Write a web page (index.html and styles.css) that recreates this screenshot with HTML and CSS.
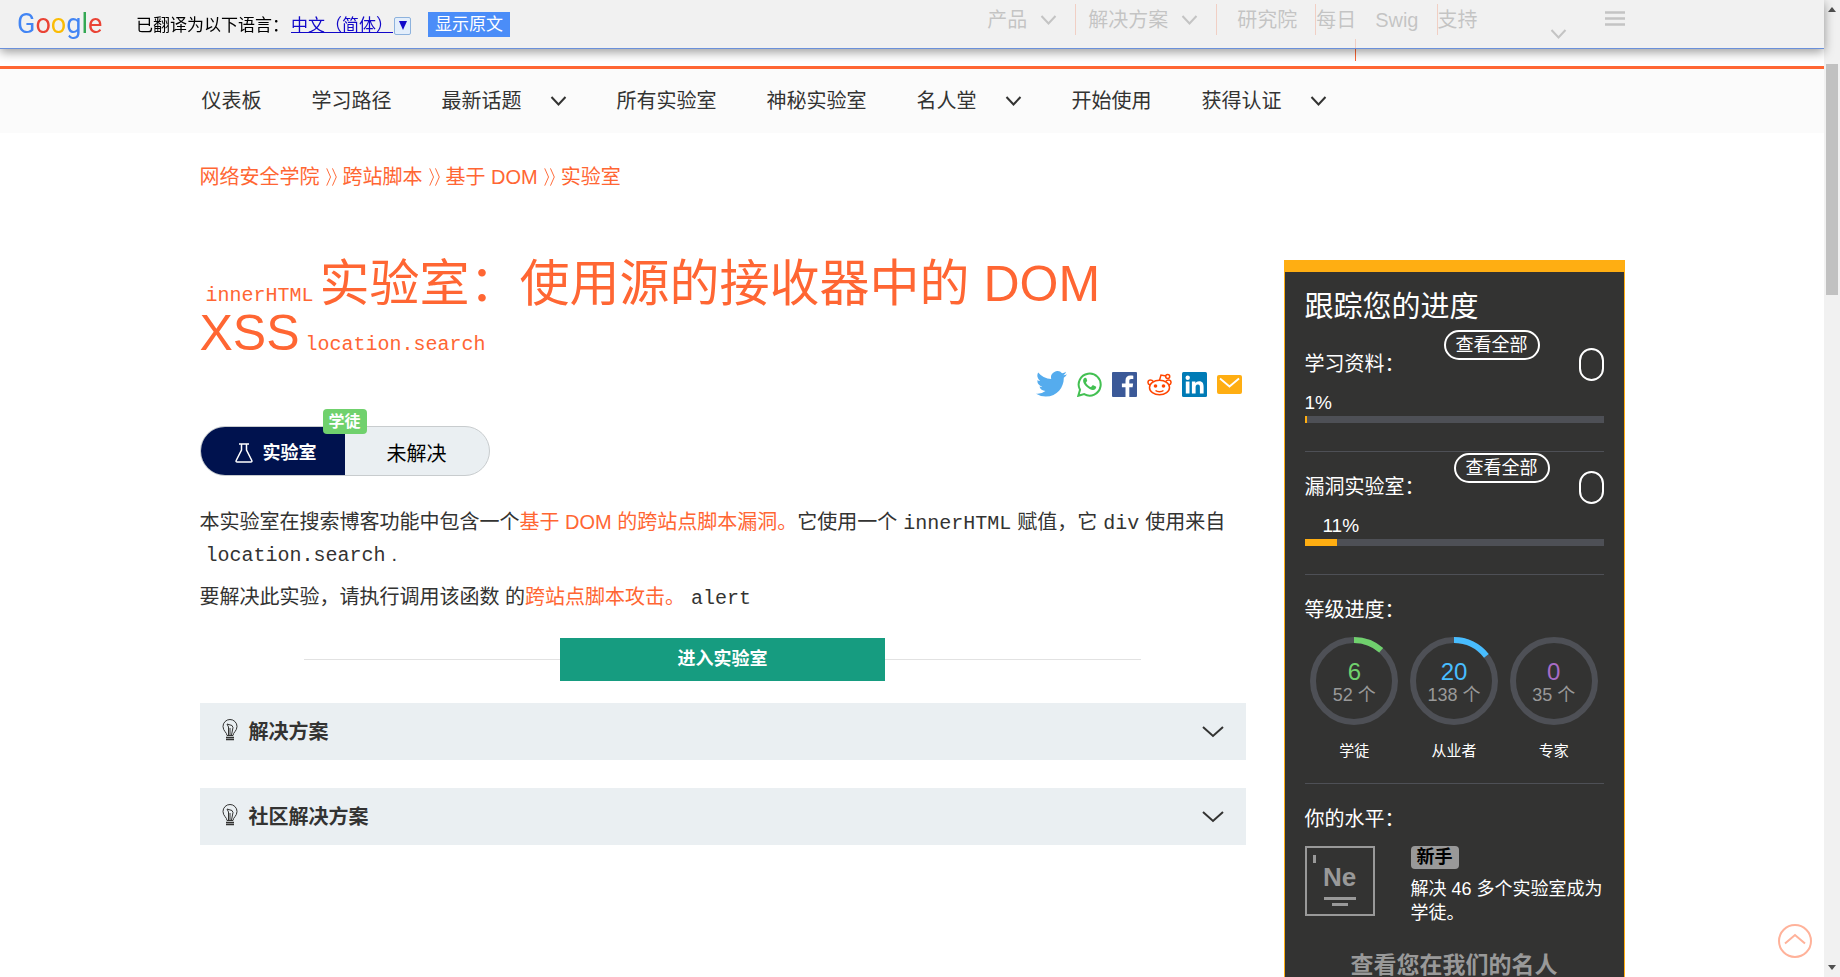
FILE: index.html
```html
<!DOCTYPE html>
<html lang="zh-CN">
<head>
<meta charset="utf-8">
<title>实验室：使用源的接收器中的 DOM XSS</title>
<link rel="stylesheet" href="styles.css">
</head>

<body>

<!-- translate toolbar -->
<div class="translate-bar">
  <a class="google" href="#"><span class="b">G</span><span class="r">o</span><span class="y">o</span><span class="b">g</span><span class="g">l</span><span class="r">e</span></a>
  <span class="translate-label">已翻译为以下语言：</span>
  <a class="translate-lang" href="#">中文（简体）</a>
  <button class="lang-arrow" type="button" aria-label="语言"><svg width="10" height="10" viewBox="0 0 10 10"><path d="M1 0h8L5 9z" fill="#1208c9"/></svg></button>
  <button class="show-original" type="button">显示原文</button>
</div>

<header class="site-header">
  <ul class="container top-menu">
    <li class="first"><a href="#">产品</a><svg class="chev" viewBox="0 0 17 10"><path d="M1.500 1l7 7.500 7-7.500"/></svg></li>
    <li><a href="#">解决方案</a><svg class="chev" viewBox="0 0 17 10"><path d="M1.500 1l7 7.500 7-7.500"/></svg></li>
    <li class="wide"><a href="#">研究院</a></li>
    <li class="daily"><a href="#">每日</a><a href="#">Swig</a></li>
    <li class="support"><a href="#">支持</a><svg class="chev" viewBox="0 0 17 10"><path d="M1.500 1l7 7.500 7-7.500"/></svg></li>
    <li class="burger"><button type="button" aria-label="菜单"><svg width="20" height="15" viewBox="0 0 20 15"><path d="M0 1.500h20M0 7.500h20M0 13.500h20" stroke="#333332" stroke-width="2.500"/></svg></button></li>
  </ul>
</header>

<nav class="academy-nav">
  <ul class="container">
    <li><a href="#">仪表板</a></li>
    <li><a href="#">学习路径</a></li>
    <li><a href="#">最新话题</a><svg class="chev" viewBox="0 0 17 10"><path d="M1.500 1l7 7.500 7-7.500"/></svg></li>
    <li><a href="#">所有实验室</a></li>
    <li><a href="#">神秘实验室</a></li>
    <li><a href="#">名人堂</a><svg class="chev" viewBox="0 0 17 10"><path d="M1.500 1l7 7.500 7-7.500"/></svg></li>
    <li><a href="#">开始使用</a></li>
    <li><a href="#">获得认证</a><svg class="chev" viewBox="0 0 17 10"><path d="M1.500 1l7 7.500 7-7.500"/></svg></li>
  </ul>
</nav>

<main class="container">
  <div class="breadcrumbs">
    <a href="#">网络安全学院</a><svg class="sep" viewBox="0 0 24 20"><path d="M7 1l4 9-4 9M13 1l4 9-4 9"/></svg><a href="#">跨站脚本</a><svg class="sep" viewBox="0 0 24 20"><path d="M7 1l4 9-4 9M13 1l4 9-4 9"/></svg><a href="#">基于 DOM</a><svg class="sep" viewBox="0 0 24 20"><path d="M7 1l4 9-4 9M13 1l4 9-4 9"/></svg><a href="#">实验室</a>
  </div>

  <div class="columns">
    <section class="lab">
      <h1><code>innerHTML</code>实验室：使用源的接收器中的 DOM XSS<code>location.search</code></h1>

      <div class="share">
        <a href="#" aria-label="Twitter"><svg width="31" height="26" viewBox="0 0 24 20"><path fill="#55acee" d="M24 2.400a9.800 9.800 0 0 1-2.800.800A4.900 4.900 0 0 0 23.300.500a9.900 9.900 0 0 1-3.100 1.200 4.900 4.900 0 0 0-8.400 4.500A14 14 0 0 1 1.700 1.100a4.900 4.900 0 0 0 1.500 6.500 4.900 4.900 0 0 1-2.200-.600v.100a4.900 4.900 0 0 0 3.900 4.800 4.900 4.900 0 0 1-2.200.100 4.900 4.900 0 0 0 4.600 3.400A9.900 9.900 0 0 1 0 17.500a14 14 0 0 0 7.500 2.200c9.100 0 14-7.500 14-14v-.600A10 10 0 0 0 24 2.400z"/></svg></a>
        <a href="#" aria-label="WhatsApp"><svg width="25" height="25" viewBox="0 0 25 25"><path d="M1.300 23.800l1.700-6a11 11 0 1 1 4.200 4.300z" fill="none" stroke="#43c052" stroke-width="2"/><path fill="#43c052" d="M9.400 6.300c-.300-.700-.600-.700-1.300-.600-.700.100-2 1.200-2 3 0 2 1.500 4.100 3.200 5.900 2 2 4.800 3.600 6.800 3.500 1.500-.100 3-1.200 3.100-2.800 0-.400 0-.600-.400-.800l-2.500-1.200c-.400-.200-.700-.100-1 .200l-1 1.300c-.200.200-.500.300-.8.100-2-.900-3.400-2.200-4.400-4-.200-.300 0-.500.100-.700l.9-1.200c.1-.200.1-.400 0-.700z"/></svg></a>
        <a href="#" aria-label="Facebook"><svg width="25" height="25" viewBox="0 0 25 25"><rect width="25" height="25" rx="1" fill="#3b5998"/><path fill="#fff" d="M13.500 25v-9.800h-3.600v-3.700h3.600V8.600c0-3.300 2-5 4.900-5 1.400 0 2.300.1 2.900.2v3.300h-2c-1.600 0-2 .8-2 1.900v2.500h3.800l-.5 3.700h-3.300V25z"/></svg></a>
        <a href="#" aria-label="Reddit"><svg width="25" height="25" viewBox="0 0 25 25" fill="none" stroke="#ff4500" stroke-width="1.500"><ellipse cx="12.500" cy="15.500" rx="10" ry="7.300"/><path d="M3 13c-3-1-2.500-5 .5-5 1.500 0 2.300.8 2.800 1.500M22 13c3-1 2.500-5-.5-5-1.500 0-2.300.8-2.800 1.500M12.500 8.200L14 3l5 1M8.500 18.500c2 1.600 6 1.600 8 0"/><circle cx="20.700" cy="4.500" r="2"/><g fill="#ff4500" stroke="none"><circle cx="8.500" cy="14" r="1.800"/><circle cx="16.500" cy="14" r="1.800"/></g></svg></a>
        <a href="#" aria-label="LinkedIn"><svg width="25" height="25" viewBox="0 0 25 25"><rect width="25" height="25" rx="1.500" fill="#007bb6"/><g fill="#fff"><circle cx="5.700" cy="5.800" r="2.200"/><path d="M3.800 9.500h3.700v12H3.800zM9.900 9.500h3.500v1.700c.6-1.100 1.900-2 3.700-2 3.700 0 4.500 2.400 4.500 5.700v6.600h-3.700v-5.900c0-1.400 0-3.200-2-3.200s-2.300 1.500-2.300 3.100v6H9.900z"/></g></svg></a>
        <a href="#" aria-label="Email"><svg width="25" height="25" viewBox="0 0 25 25"><rect y="3" width="25" height="19" rx="2" fill="#ffae12"/><path d="M3 6.500l9.500 8 9.500-8" fill="none" stroke="#fff" stroke-width="1.800"/></svg></a>
      </div>

      <div class="status">
        <span class="status-lab"><svg width="18" height="20" viewBox="0 0 18 20" fill="none" stroke="#fff" stroke-width="1.500"><path d="M4 1h10M6.500 1v6L1.200 17.500c-.4 1 0 1.500 1 1.500h13.600c1 0 1.400-.5 1-1.500L11.500 7V1"/></svg>实验室</span>
        <span class="status-text">未解决</span>
        <span class="status-level">学徒</span>
      </div>

      <p>本实验室在搜索博客功能中包含一个<a href="#">基于 DOM 的跨站点脚本漏洞。</a>它使用一个<code>innerHTML</code>赋值，它<code>div</code>使用来自<code>location.search</code>.</p>
      <p>要解决此实验，请执行调用该函数 的<a href="#">跨站点脚本攻击。</a><code>alert</code></p>

      <div class="launch"><a href="#">进入实验室</a></div>

      <button class="accordion" type="button">
        <svg class="bulb" viewBox="0 0 16 22"><path d="M5 16.500c0-3-4-4.500-4-9a7 7 0 0 1 14 0c0 4.500-4 6-4 9zM6.500 16V8L5 5l5 1.500 1 2L9.500 16M8 16V9"/><path d="M4 18.500h8M4 20.500h8" stroke-width="1.400"/></svg>
        <span>解决方案</span>
        <svg class="open" viewBox="0 0 22 12"><path d="M1 1l10 9L21 1"/></svg>
      </button>
      <button class="accordion" type="button">
        <svg class="bulb" viewBox="0 0 16 22"><path d="M5 16.500c0-3-4-4.500-4-9a7 7 0 0 1 14 0c0 4.500-4 6-4 9zM6.500 16V8L5 5l5 1.500 1 2L9.500 16M8 16V9"/><path d="M4 18.500h8M4 20.500h8" stroke-width="1.400"/></svg>
        <span>社区解决方案</span>
        <svg class="open" viewBox="0 0 22 12"><path d="M1 1l10 9L21 1"/></svg>
      </button>
    </section>

    <aside class="progress">
      <h2>跟踪您的进度</h2>

      <div class="track">
        <div class="track-head">
          <span class="track-name">学习资料：</span>
          <a class="pill" href="#">查看全部</a>
          <a class="oval" href="#" aria-label="查看全部"></a>
        </div>
        <div class="track-value">1%</div>
        <div class="bar"><div style="width:1%"></div></div>
      </div>

      <div class="track">
        <div class="track-head">
          <span class="track-name">漏洞实验室：</span>
          <a class="pill" href="#">查看全部</a>
          <a class="oval" href="#" aria-label="查看全部"></a>
        </div>
        <div class="track-value" style="margin-left:6%">11%</div>
        <div class="bar"><div style="width:11%"></div></div>
      </div>

      <div class="levels">
        <h3>等级进度：</h3>
        <div class="rings">
          <div class="ring">
            <div class="dial">
              <svg viewBox="0 0 88 88"><circle cx="44" cy="44" r="41"/><circle class="apprentice" cx="44" cy="44" r="41" pathLength="52" stroke-dasharray="6 46"/></svg>
              <b class="apprentice">6</b><small>52 个</small>
            </div>
            <span>学徒</span>
          </div>
          <div class="ring">
            <div class="dial">
              <svg viewBox="0 0 88 88"><circle cx="44" cy="44" r="41"/><circle class="practitioner" cx="44" cy="44" r="41" pathLength="138" stroke-dasharray="20 118"/></svg>
              <b class="practitioner">20</b><small>138 个</small>
            </div>
            <span>从业者</span>
          </div>
          <div class="ring">
            <div class="dial">
              <svg viewBox="0 0 88 88"><circle cx="44" cy="44" r="41"/></svg>
              <b class="expert">0</b><small>35 个</small>
            </div>
            <span>专家</span>
          </div>
        </div>
      </div>

      <div class="your-level">
        <h3>你的水平：</h3>
        <div class="level-row">
          <div class="level-icon">
            <svg viewBox="0 0 70 70"><path d="M9.500 9v8M19 52.500h32M27 58.500h16"/></svg>
            Ne
          </div>
          <div class="level-text">
            <span class="level-badge">新手</span>
            <p>解决 46 多个实验室成为学徒。</p>
          </div>
        </div>
        <a class="fame" href="#">查看您在我们的名人堂中的排名</a>
      </div>
    </aside>
  </div>
</main>

<a class="to-top" href="#" aria-label="Top"><svg width="34" height="34" viewBox="0 0 34 34" fill="none" stroke="#ffb29a"><circle cx="17" cy="17" r="16" stroke-width="2"/><path d="M7 19.500l10-8.500 10 8.500" stroke-width="2"/></svg></a>

<div class="scrollbar">
  <svg width="8" height="5" viewBox="0 0 8 5"><path d="M0 5l4-5 4 5z"/></svg>
  <div class="thumb"></div>
  <svg width="8" height="5" viewBox="0 0 8 5"><path d="M0 0l4 5 4-5z"/></svg>
</div>

</body>
</html>
```
FILE: styles.css
```css
* {
   box-sizing: border-box;
}

html {
   height: 100%;
   overflow: hidden;
}

body {
   height: 100%;
   margin: 0;
   padding-right: 16px;
   overflow: hidden;
   background: #fff;
   color: #333332;
   font-family: "Liberation Sans", "Noto Sans CJK SC", sans-serif;
   font-size: 20px;
   line-height: 32px;
}

a {
   color: #ff6633;
   text-decoration: none;
}

button {
   margin: 0;
   padding: 0;
   border: 0;
   background: none;
   color: inherit;
   font: inherit;
}

ul {
   margin: 0;
   padding: 0;
   list-style: none;
}

svg {
   display: block;
   flex: none;
}

code {
   padding: 0 6px;
   font-family: "Liberation Mono", monospace;
   font-size: 20px;
   line-height: 1;
}

.container {
   max-width: 1425px;
   margin: 0 auto;
}

.chev {
   width: 17px;
   height: 10px;
   fill: none;
   stroke: #333332;
   stroke-width: 2;
}

/* translate toolbar, lies over the site header */
.translate-bar {
   position: fixed;
   top: 0;
   left: 0;
   right: 16px;
   z-index: 10;
   display: flex;
   align-items: center;
   height: 49px;
   padding-left: 17px;
   border-bottom: 1px solid #6b90da;
   background: rgba(237, 237, 237, 0.78);
   box-shadow: 0 3px 10px rgba(0, 0, 0, 0.4);
   color: #000;
   font-size: 17px;
   line-height: 32px;
}

.google {
   width: 119px;
   font-family: Roboto, sans-serif;
   font-size: 27px;
}

.google .b { color: #4285f4; }
.google .r { color: #ea4335; }
.google .y { color: #fbbc05; }
.google .g { color: #34a853; }

.translate-label {
   width: 155px;
   padding-top: 3px;
   white-space: nowrap;
}

.translate-lang {
   padding-top: 3px;
   color: #1208c9;
   text-decoration: underline;
}

.lang-arrow {
   display: flex;
   align-items: center;
   justify-content: center;
   width: 17px;
   height: 18px;
   margin: 3px 17px 0 1px;
   border: 1px solid #8db2dd;
   border-radius: 2px;
   background: #e3eefb;
}

.show-original {
   height: 25px;
   padding: 0 7px;
   background: #4b8df8;
   color: #fff;
   line-height: 25px;
}

/* site header */
.site-header {
   height: 69px;
   border-bottom: 3px solid #ff6633;
}

.top-menu {
   display: flex;
   justify-content: flex-end;
   padding-top: 4px;
}

.top-menu li {
   display: flex;
   align-items: center;
   gap: 13px;
   height: 31px;
   padding: 0 18px 0 12px;
   border-right: 1px solid #ff6633;
}

.top-menu a {
   color: #333332;
}

.top-menu .wide {
   padding-left: 20px;
}

.top-menu .daily {
   position: relative;
   gap: 19px;
   padding-left: 0;
}

.top-menu .daily::after {
   content: "";
   position: absolute;
   top: 35px;
   left: 39px;
   height: 22px;
   border-left: 1px solid #ff6633;
}

.top-menu .support {
   gap: 72px;
   padding: 0 38px 0 0;
   border: 0;
}

.top-menu .support .chev {
   align-self: flex-end;
   margin-bottom: -4px;
}

.top-menu .burger {
   align-items: flex-start;
   padding: 7px 0 0;
   border: 0;
}

/* academy nav */
.academy-nav {
   background: #fbfbfb;
}

.academy-nav ul {
   display: flex;
   gap: 50px;
   padding: 16px 2px;
}

.academy-nav li {
   display: flex;
   align-items: center;
   gap: 28px;
}

.academy-nav a {
   color: #333332;
}

.breadcrumbs {
   display: flex;
   align-items: center;
   padding-top: 28px;
}

.sep {
   width: 23px;
   height: 20px;
   fill: none;
   stroke: #ff6633;
   stroke-width: 1;
}

.columns {
   display: grid;
   grid-template-columns: 1fr 341px;
   gap: 38px;
   align-items: start;
   margin-top: 67px;
}

h1 {
   margin: 0;
   color: #ff6633;
   font-size: 50px;
   font-weight: normal;
   line-height: 49px;
}

.share {
   display: flex;
   align-items: center;
   justify-content: flex-end;
   gap: 10px;
   padding: 13px 4px 0 0;
}

/* lab status */
.status {
   position: relative;
   display: flex;
   width: 290px;
   height: 50px;
   margin: 29px 0 30px;
   border: 1px solid #c8ccce;
   border-radius: 25px;
   background: #eaeff2;
   color: #000;
   line-height: 54px;
}

.status-lab {
   display: flex;
   align-items: center;
   justify-content: center;
   gap: 10px;
   width: 144px;
   padding: 4px 0 0 6px;
   border-radius: 25px 0 0 25px;
   background: #00124e;
   color: #fff;
   font-size: 18px;
   font-weight: bold;
   line-height: 24px;
}

.status-text {
   flex: 1;
   text-align: center;
}

.status-level {
   position: absolute;
   top: -18px;
   left: 122px;
   padding: 0 6px;
   border-radius: 4px;
   background: #70d16d;
   color: #fff;
   font-size: 16px;
   font-weight: bold;
   line-height: 25px;
}

.lab p {
   margin: 0 0 11px;
}

.launch {
   display: flex;
   align-items: center;
   width: 80%;
   margin: 25px auto 22px;
}

.launch::before,
.launch::after {
   content: "";
   flex: 1;
   border-top: 1px solid #e2e2e2;
}

.launch a {
   width: 325px;
   background: #169c80;
   color: #fff;
   font-size: 18px;
   font-weight: bold;
   line-height: 43px;
   text-align: center;
}

.accordion {
   display: flex;
   align-items: center;
   width: 100%;
   height: 57px;
   margin-bottom: 28px;
   padding: 0 22px;
   background: #eaeff2;
   font-weight: bold;
   text-align: left;
}

.accordion span {
   flex: 1;
}

.bulb {
   width: 16px;
   height: 22px;
   margin: 0 11px 4px 0;
   fill: none;
   stroke: #333332;
   stroke-width: 1;
}

.open {
   width: 22px;
   height: 12px;
   fill: none;
   stroke: #333332;
   stroke-width: 2;
}

/* progress panel */
.progress {
   padding: 10px 20px 20px;
   border: 1px solid #ffae12;
   border-top-width: 12px;
   background: #333332;
   color: #fff;
}

.progress h2 {
   margin: 0;
   font-size: 29px;
   font-weight: normal;
   line-height: 50px;
}

.progress h3 {
   margin: 0 0 12px;
   font-size: 20px;
   font-weight: normal;
   line-height: 30px;
}

.track {
   padding-bottom: 28px;
   border-bottom: 1px solid #4e5056;
}

.track + .track {
   padding-top: 1px;
}

.progress h2 + .track {
   margin-top: -2px;
}

.track-head {
   display: flex;
   justify-content: space-between;
   height: 51px;
}

.track-name {
   align-self: flex-end;
   line-height: 34px;
}

.pill {
   height: 30px;
   padding: 0 10px;
   border: 2px solid #fff;
   border-radius: 15px;
   color: #fff;
   font-size: 18px;
   line-height: 26px;
}

.oval {
   align-self: flex-end;
   width: 25px;
   height: 33px;
   border: 2px solid #fff;
   border-radius: 13px;
}

.track-value {
   padding-top: 9px;
   font-size: 19px;
   line-height: 26px;
}

.bar {
   height: 7px;
   background: #4e5056;
}

.bar div {
   height: 100%;
   background: #ffae12;
}

.levels {
   padding: 20px 0;
   border-bottom: 1px solid #4e5056;
}

.rings {
   display: grid;
   grid-template-columns: repeat(3, 1fr);
   text-align: center;
}

.ring span {
   display: block;
   margin-top: 14px;
   font-size: 15px;
   line-height: 24px;
}

.dial {
   display: grid;
   align-content: center;
   width: 88px;
   height: 88px;
   margin: 0 auto;
   padding-top: 3px;
   position: relative;
}

.dial svg {
   position: absolute;
   inset: 0;
   transform: rotate(-90deg);
   fill: none;
   stroke: #4e5056;
   stroke-width: 6;
}

.dial svg .apprentice { stroke: #70d16d; }
.dial svg .practitioner { stroke: #48bdff; }

.dial b {
   font-size: 24px;
   font-weight: normal;
   line-height: 24px;
}

.dial small {
   color: #999;
   font-size: 18px;
   line-height: 22px;
}

b.apprentice { color: #70d16d; }
b.practitioner { color: #48bdff; }
b.expert { color: #a86cc6; }

.your-level {
   padding-top: 20px;
}

.level-row {
   display: flex;
   gap: 36px;
}

.level-icon {
   position: relative;
   flex: none;
   width: 70px;
   height: 70px;
   border: 2px solid #999;
   color: #999;
   font-size: 26px;
   font-weight: bold;
   line-height: 58px;
   text-align: center;
}

.level-icon svg {
   position: absolute;
   inset: -2px;
   fill: none;
   stroke: #999;
   stroke-width: 3;
}

.level-badge {
   display: inline-block;
   padding: 0 6px;
   border-radius: 4px;
   background: #999;
   color: #000;
   font-size: 18px;
   font-weight: bold;
   line-height: 23px;
   vertical-align: top;
}

.level-text {
   line-height: 24px;
}

.level-text p {
   margin: 7px 0 0;
   font-size: 18px;
}

.fame {
   display: block;
   margin: 23px 40px 0;
   color: #999;
   font-size: 23px;
   font-weight: bold;
   line-height: 34px;
   text-align: center;
}

.to-top {
   position: fixed;
   right: 28px;
   bottom: 19px;
}

/* window scrollbar */
.scrollbar {
   position: fixed;
   top: 0;
   right: 0;
   bottom: 0;
   display: flex;
   flex-direction: column;
   align-items: center;
   width: 16px;
   padding: 7px 0;
   background: #f1f1f1;
   fill: #505050;
}

.thumb {
   width: 12px;
   height: 24%;
   margin: 52px 0 auto;
   background: #c1c1c1;
}
```
